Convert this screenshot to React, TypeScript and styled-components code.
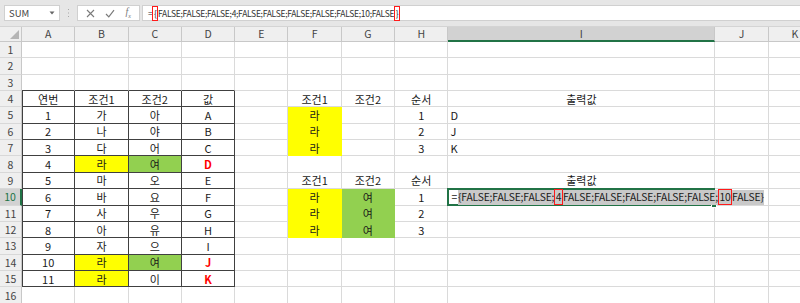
import React from 'react';
import styled, { createGlobalStyle } from 'styled-components';

const FONT = `"Noto Sans CJK KR", "Noto Sans", sans-serif`;

const Global = createGlobalStyle`
  html, body { margin: 0; padding: 0; background: #ffffff; }
  body { font-family: ${FONT}; }
`;

const Page = styled.div`
  width: 800px;
  height: 303px;
  overflow: hidden;
  background: #ffffff;
  font-family: ${FONT};
`;

const Toolbar = styled.div`
  box-sizing: border-box;
  height: 27px;
  background: #e6e6e6;
  display: flex;
  align-items: flex-start;
  padding: 5px 0 0 4px;
  border-bottom: 1px solid #d4d4d4;
`;

const NameBox = styled.div`
  box-sizing: border-box;
  width: 56px;
  height: 16px;
  background: #ffffff;
  border: 1px solid #d0d0d0;
  display: flex;
  align-items: center;
  justify-content: space-between;
  padding: 0 4px 0 4px;
  font-size: 9.5px;
  color: #444;
`;

const Grip = styled.div`
  width: 17px;
  height: 16px;
  display: flex;
  align-items: center;
  justify-content: center;
`;

const ButtonBox = styled.div`
  box-sizing: border-box;
  width: 63px;
  height: 16px;
  background: #ffffff;
  border: 1px solid #d0d0d0;
  display: flex;
  align-items: center;
  justify-content: space-around;
  padding: 0 3px;
`;

const FxLabel = styled.span`
  font-family: "Liberation Serif", serif;
  font-style: italic;
  font-size: 10px;
  color: #7a7a7a;
  line-height: 1;
  sub { font-size: 6px; }
`;

const FormulaInput = styled.div`
  box-sizing: border-box;
  flex: 1;
  margin-left: 2px;
  height: 16px;
  background: #ffffff;
  border: 1px solid #d0d0d0;
  border-right: none;
  display: flex;
  align-items: center;
  padding-left: 5px;
  font-size: 8.5px;
  letter-spacing: -0.3px;
  color: #333;
  white-space: nowrap;
`;

const Mark = styled.span<{ $tall?: boolean }>`
  box-sizing: border-box;
  display: inline-flex;
  align-items: center;
  justify-content: center;
  border: 1.5px solid #ff1a1a;
  padding: 0 0.5px;
  height: ${p => (p.$tall ? '16px' : '15px')};
  line-height: 1;
`;

const Grid = styled.div`
  display: grid;
  grid-template-columns: 22px repeat(8, 53.3px) 267px 53.3px 53.3px;
  grid-template-rows: 14.8px repeat(16, 16.38px);
`;

const Corner = styled.div`
  box-sizing: border-box;
  background: #efefef;
  border-right: 1px solid #c8c8c8;
  border-bottom: 1px solid #c8c8c8;
  position: relative;
  &::after {
    content: '';
    position: absolute;
    right: 2px;
    bottom: 2px;
    border-style: solid;
    border-width: 0 0 9px 9px;
    border-color: transparent transparent #b5b5b5 transparent;
  }
`;

const ColHead = styled.div<{ $sel?: boolean }>`
  box-sizing: border-box;
  display: flex;
  align-items: center;
  justify-content: center;
  background: ${p => (p.$sel ? '#d2d2d2' : '#efefef')};
  border-right: 1px solid #c8c8c8;
  border-bottom: ${p => (p.$sel ? '2px solid #217346' : '1px solid #c8c8c8')};
  font-size: 10.5px;
  color: #444;
`;

const RowHead = styled.div<{ $sel?: boolean }>`
  box-sizing: border-box;
  display: flex;
  align-items: center;
  justify-content: center;
  background: ${p => (p.$sel ? '#d2d2d2' : '#efefef')};
  border-right: ${p => (p.$sel ? '2px solid #217346' : '1px solid #c8c8c8')};
  border-bottom: 1px solid #d8d8d8;
  font-size: 10.5px;
  color: ${p => (p.$sel ? '#217346' : '#444')};
`;

type CellProps = {
  $fill?: string;
  $dark?: boolean;
  $darkLeft?: boolean;
  $darkBottom?: boolean;
  $left?: boolean;
  $red?: boolean;
  $active?: boolean;
};

const DARK = '#404040';
const GRID = '#dadada';

const Cell = styled.div<CellProps>`
  box-sizing: border-box;
  position: relative;
  display: flex;
  align-items: center;
  justify-content: ${p => (p.$left ? 'flex-start' : 'center')};
  padding: 1px 2px 0;
  background: ${p => p.$fill || 'transparent'};
  border-right: 1px solid ${p => (p.$dark ? DARK : p.$fill || GRID)};
  border-bottom: 1px solid ${p => (p.$dark || p.$darkBottom ? DARK : p.$fill || GRID)};
  box-shadow: ${p => (p.$darkLeft ? `inset 1px 0 0 ${DARK}` : 'none')};
  font-size: 11px;
  line-height: 1;
  color: ${p => (p.$red ? '#ff0000' : '#1a1a1a')};
  font-weight: ${p => (p.$red ? 700 : 400)};
  white-space: nowrap;
  z-index: ${p => (p.$active ? 3 : 'auto')};
`;

const ActiveFrame = styled.div`
  position: absolute;
  left: -1px;
  top: -1px;
  right: -1px;
  bottom: -1px;
  border: 2px solid #217346;
  pointer-events: none;
  &::after {
    content: '';
    position: absolute;
    right: -4px;
    bottom: -4px;
    width: 4px;
    height: 4px;
    background: #217346;
    border: 1px solid #ffffff;
  }
`;

const EditText = styled.span`
  position: relative;
  z-index: 4;
  display: flex;
  align-items: center;
  height: 15px;
  padding-left: 1px;
  font-size: 10.3px;
  letter-spacing: -0.15px;
  color: #1a1a1a;
`;

const Highlight = styled.span`
  display: inline-flex;
  align-items: center;
  height: 15px;
  margin-left: 1px;
  background: #c9c9c9;
`;

const COLS = ['A', 'B', 'C', 'D', 'E', 'F', 'G', 'H', 'I', 'J', 'K'];

type Def = { v?: React.ReactNode; fill?: string; red?: boolean; left?: boolean; active?: boolean };

const YELLOW = '#ffff00';
const GREEN = '#92d050';

const buildSheet = () => {
  const s: Record<string, Def> = {};
  const c1 = ['가', '나', '다', '라', '마', '바', '사', '아', '자', '라', '라'];
  const c2 = ['아', '야', '어', '여', '오', '요', '우', '유', '으', '여', '이'];
  const vals = ['A', 'B', 'C', 'D', 'E', 'F', 'G', 'H', 'I', 'J', 'K'];
  s.A4 = { v: '연번' };
  s.B4 = { v: '조건1' };
  s.C4 = { v: '조건2' };
  s.D4 = { v: '값' };
  c1.forEach((x, i) => {
    const r = i + 5;
    const hit = x === '라';
    s[`A${r}`] = { v: String(i + 1) };
    s[`B${r}`] = { v: x, fill: hit ? YELLOW : undefined };
    s[`C${r}`] = { v: c2[i], fill: hit && c2[i] === '여' ? GREEN : undefined };
    s[`D${r}`] = { v: vals[i], red: hit };
  });
  s.F4 = { v: '조건1' };
  s.G4 = { v: '조건2' };
  s.H4 = { v: '순서' };
  s.I4 = { v: '출력값' };
  ['D', 'J', 'K'].forEach((x, i) => {
    const r = i + 5;
    s[`F${r}`] = { v: '라', fill: YELLOW };
    s[`H${r}`] = { v: String(i + 1) };
    s[`I${r}`] = { v: x, left: true };
  });
  s.F9 = { v: '조건1' };
  s.G9 = { v: '조건2' };
  s.H9 = { v: '순서' };
  s.I9 = { v: '출력값' };
  [1, 2, 3].forEach((n, i) => {
    const r = i + 10;
    s[`F${r}`] = { v: '라', fill: YELLOW };
    s[`G${r}`] = { v: '여', fill: GREEN };
    s[`H${r}`] = { v: String(n) };
  });
  s.I10 = {
    left: true,
    active: true,
    v: (
      <EditText>
        =
        <Highlight>
          {'{FALSE;FALSE;FALSE;'}
          <Mark $tall>4</Mark>
          {'FALSE;FALSE;FALSE;FALSE;FALSE;'}
          <Mark $tall>10</Mark>
          {'FALSE}'}
        </Highlight>
      </EditText>
    ),
  };
  return s;
};

const SHEET = buildSheet();

const XIcon = () => (
  <svg width="9" height="9" viewBox="0 0 9 9">
    <path d="M1 1 L8 8 M8 1 L1 8" stroke="#7a7a7a" strokeWidth="1.1" fill="none" />
  </svg>
);

const CheckIcon = () => (
  <svg width="10" height="9" viewBox="0 0 10 9">
    <path d="M1 5 L3.8 7.8 L9 1.2" stroke="#7a7a7a" strokeWidth="1.2" fill="none" />
  </svg>
);

const Caret = () => (
  <svg width="6" height="4" viewBox="0 0 6 4">
    <path d="M0.5 0.5 L5.5 0.5 L3 3.5 Z" fill="#666" />
  </svg>
);

const Dots = () => (
  <svg width="3" height="10" viewBox="0 0 3 10">
    <rect x="1" y="1" width="1" height="1" fill="#a8a8a8" />
    <rect x="1" y="4.5" width="1" height="1" fill="#a8a8a8" />
    <rect x="1" y="8" width="1" height="1" fill="#a8a8a8" />
  </svg>
);

export default function App() {
  const rows = Array.from({ length: 16 }, (_, i) => i + 1);
  return (
    <Page>
      <Global />
      <Toolbar>
        <NameBox>
          <span>SUM</span>
          <Caret />
        </NameBox>
        <Grip>
          <Dots />
        </Grip>
        <ButtonBox>
          <XIcon />
          <CheckIcon />
          <FxLabel>
            f<sub>x</sub>
          </FxLabel>
        </ButtonBox>
        <FormulaInput>
          =<Mark>{'{'}</Mark>
          FALSE;FALSE;FALSE;4;FALSE;FALSE;FALSE;FALSE;FALSE;10;FALSE
          <Mark>{'}'}</Mark>
        </FormulaInput>
      </Toolbar>
      <Grid>
        <Corner />
        {COLS.map(c => (
          <ColHead key={c} $sel={c === 'I'}>
            {c}
          </ColHead>
        ))}
        {rows.map(r => (
          <React.Fragment key={r}>
            <RowHead $sel={r === 10}>{r}</RowHead>
            {COLS.map((c, ci) => {
              const d = SHEET[`${c}${r}`] || {};
              const inTable = ci <= 3 && r >= 4 && r <= 15;
              return (
                <Cell
                  key={c}
                  $fill={d.fill}
                  $dark={inTable}
                  $darkLeft={inTable && c === 'A'}
                  $darkBottom={ci <= 3 && r === 3}
                  $left={d.left}
                  $red={d.red}
                  $active={d.active}
                >
                  {d.v}
                  {d.active && <ActiveFrame />}
                </Cell>
              );
            })}
          </React.Fragment>
        ))}
      </Grid>
    </Page>
  );
}
